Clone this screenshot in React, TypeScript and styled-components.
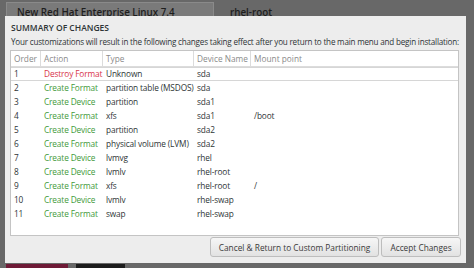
import * as React from "react";
import styled, { createGlobalStyle } from "styled-components";

const GlobalStyle = createGlobalStyle`
  html, body {
    margin: 0;
    padding: 0;
    background: #686868;
  }
  body {
    font-family: "Open Sans", "DejaVu Sans", sans-serif;
    color: #2e3436;
  }
`;

const Screen = styled.div`
  position: relative;
  width: 474px;
  height: 268px;
  overflow: hidden;
  background: #686868;
  display: flex;
  flex-direction: column;
  justify-content: space-between;
`;

const BehindTop = styled.div`
  display: flex;
  align-items: flex-start;
  padding: 2px 0 0 6px;
  gap: 16px;
`;

const BehindBox = styled.div`
  width: 196px;
  height: 22px;
  padding: 3px 0 0 10px;
  background: #7a7a7a;
  border: 1px solid #8a8a8a;
  font-size: 9.8px;
  font-weight: 600;
  color: #1e1e1e;
`;

const BehindLabel = styled.div`
  padding-top: 4px;
  font-size: 9.8px;
  font-weight: 600;
  color: #1e1e1e;
`;

const BehindBottom = styled.div`
  display: flex;
  gap: 8px;
  padding-left: 6px;
`;

const BehindButton = styled.div<{ $color: string; $w: number }>`
  width: ${(p) => p.$w}px;
  height: 4px;
  background: ${(p) => p.$color};
`;

const Dialog = styled.div`
  position: absolute;
  left: 5px;
  top: 16px;
  width: 461px;
  height: 247px;
  box-sizing: border-box;
  background: #ededed;
  padding: 4px 5px 6px 5px;
  display: flex;
  flex-direction: column;
`;

const Title = styled.div`
  font-size: 8.5px;
  font-weight: 600;
  padding-left: 1px;
  height: 15px;
  line-height: 15px;
`;

const Subtitle = styled.div`
  font-size: 8.1px;
  letter-spacing: -0.2px;
  padding-left: 1px;
  height: 14px;
  line-height: 14px;
  white-space: nowrap;
`;

const TableBox = styled.div`
  margin-top: 1px;
  margin-right: 2px;
  height: 186px;
  background: #fff;
  border: 1px solid #c4c4c4;
  box-sizing: border-box;
`;

const Grid = styled.div`
  display: grid;
  grid-template-columns: 30px 62px 91px 57px 1fr;
`;

const HeadCell = styled.div<{ $last?: boolean }>`
  height: 15px;
  line-height: 15px;
  font-size: 8.3px;
  color: #8a8a8a;
  padding-left: 3px;
  border-bottom: 1px solid #dcdcdc;
  border-right: ${(p) => (p.$last ? "none" : "1px solid #dcdcdc")};
`;

const Row = styled.div`
  display: contents;
`;

const Cell = styled.div<{ $tone?: "red" | "green"; $focus?: boolean }>`
  height: 14px;
  line-height: 14px;
  font-size: 8.3px;
  letter-spacing: -0.14px;
  padding-left: 3px;
  white-space: nowrap;
  color: ${(p) =>
    p.$tone === "red" ? "#d8344a" : p.$tone === "green" ? "#3f9a3a" : "#2e3436"};
  ${(p) =>
    p.$focus
      ? "border-top: 1px solid #d6d6d6; border-bottom: 1px solid #d6d6d6; height: 12px; line-height: 12px;"
      : ""}
`;

const Footer = styled.div`
  margin-top: auto;
  display: flex;
  justify-content: flex-end;
  gap: 2px;
`;

const Button = styled.button<{ $w: number }>`
  width: ${(p) => p.$w}px;
  height: 20px;
  border: 1px solid #bdbdbd;
  border-radius: 3px;
  background: linear-gradient(#f6f6f6, #e2e2e2);
  font-family: "Open Sans", "DejaVu Sans", sans-serif;
  font-size: 8.3px;
  color: #3a3a3a;
  padding: 0;
`;

type Change = {
  order: number;
  action: string;
  type: string;
  device: string;
  mount: string;
};

const changes: Change[] = [
  { order: 1, action: "Destroy Format", type: "Unknown", device: "sda", mount: "" },
  { order: 2, action: "Create Format", type: "partition table (MSDOS)", device: "sda", mount: "" },
  { order: 3, action: "Create Device", type: "partition", device: "sda1", mount: "" },
  { order: 4, action: "Create Format", type: "xfs", device: "sda1", mount: "/boot" },
  { order: 5, action: "Create Device", type: "partition", device: "sda2", mount: "" },
  { order: 6, action: "Create Format", type: "physical volume (LVM)", device: "sda2", mount: "" },
  { order: 7, action: "Create Device", type: "lvmvg", device: "rhel", mount: "" },
  { order: 8, action: "Create Device", type: "lvmlv", device: "rhel-root", mount: "" },
  { order: 9, action: "Create Format", type: "xfs", device: "rhel-root", mount: "/" },
  { order: 10, action: "Create Device", type: "lvmlv", device: "rhel-swap", mount: "" },
  { order: 11, action: "Create Format", type: "swap", device: "rhel-swap", mount: "" },
];

const App: React.FC = () => (
  <>
    <GlobalStyle />
    <Screen>
      <BehindTop>
        <BehindBox>New Red Hat Enterprise Linux 7.4</BehindBox>
        <BehindLabel>rhel-root</BehindLabel>
      </BehindTop>
      <BehindBottom>
        <BehindButton $color="#6e1a36" $w={62} />
        <BehindButton $color="#1c1c1c" $w={49} />
      </BehindBottom>

      <Dialog>
        <Title>SUMMARY OF CHANGES</Title>
        <Subtitle>
          Your customizations will result in the following changes taking effect after you
          return to the main menu and begin installation:
        </Subtitle>
        <TableBox>
          <Grid>
            <HeadCell>Order</HeadCell>
            <HeadCell>Action</HeadCell>
            <HeadCell>Type</HeadCell>
            <HeadCell>Device Name</HeadCell>
            <HeadCell $last>Mount point</HeadCell>
            {changes.map((c, i) => {
              const focus = i === 0;
              const tone = c.action.startsWith("Destroy") ? "red" : "green";
              return (
                <Row key={c.order}>
                  <Cell $focus={focus}>{c.order}</Cell>
                  <Cell $focus={focus} $tone={tone}>
                    {c.action}
                  </Cell>
                  <Cell $focus={focus}>{c.type}</Cell>
                  <Cell $focus={focus}>{c.device}</Cell>
                  <Cell $focus={focus}>{c.mount}</Cell>
                </Row>
              );
            })}
          </Grid>
        </TableBox>
        <Footer>
          <Button $w={169}>Cancel &amp; Return to Custom Partitioning</Button>
          <Button $w={80}>Accept Changes</Button>
        </Footer>
      </Dialog>
    </Screen>
  </>
);

export default App;
